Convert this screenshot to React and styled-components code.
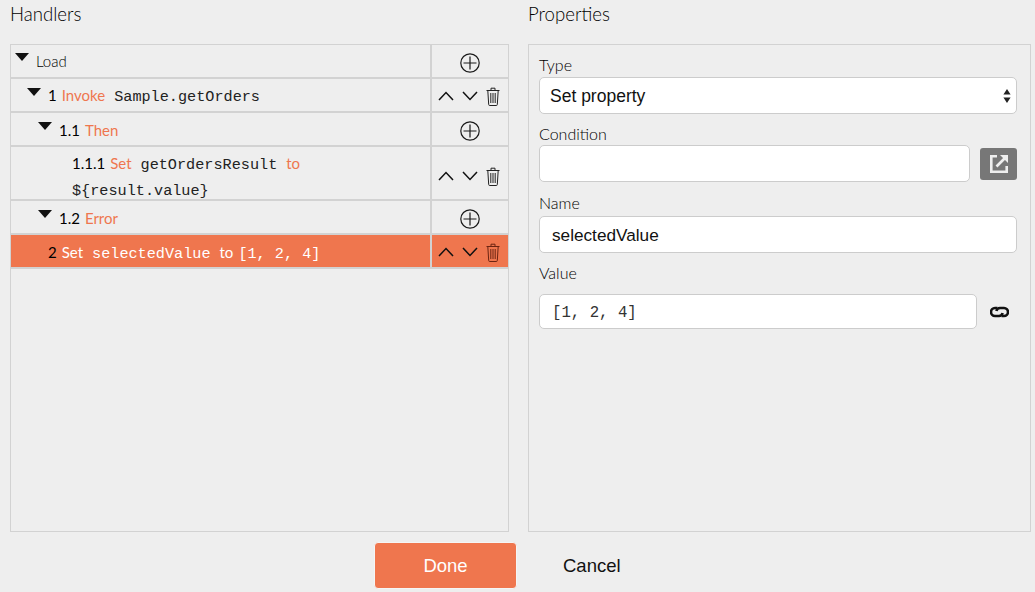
import React from 'react';
import styled, { createGlobalStyle } from 'styled-components';

const ORANGE = '#ef764e';
const LINE = '#d2d2d2';

const GlobalStyle = createGlobalStyle`
  html, body {
    margin: 0;
    padding: 0;
    background: #eeeeee;
  }
  body {
    font-family: Lato, sans-serif;
    font-weight: 300;
    color: #000;
  }
`;

const Page = styled.div`
  width: 1035px;
  height: 592px;
  overflow: hidden;
  display: flex;
  flex-direction: column;
  padding: 0 4px 0 10px;
  box-sizing: border-box;
`;

const Columns = styled.div`
  display: grid;
  grid-template-columns: 499px 503px;
  column-gap: 19px;
`;

const Heading = styled.div`
  font-size: 18.6px;
  line-height: 28px;
  height: 44px;
`;

const Tree = styled.div`
  height: 488px;
  box-sizing: border-box;
  border: 1px solid ${LINE};
  position: relative;
  display: flex;
  flex-direction: column;
`;

const Divider = styled.div`
  position: absolute;
  top: 0;
  left: 419px;
  width: 2px;
  height: 223px;
  background: ${LINE};
`;

const Row = styled.div`
  display: grid;
  grid-template-columns: 419px 78px;
  height: ${p => p.$height || 34}px;
  box-sizing: border-box;
  border-bottom: 2px solid ${LINE};
  background: ${p => (p.$selected ? ORANGE : 'transparent')};
`;

const Label = styled.div`
  display: flex;
  align-items: ${p => (p.$wrap ? 'flex-start' : 'center')};
  padding: ${p => p.$top ?? 1}px 0 0 ${p => p.$indent}px;
  font-size: 15px;
  white-space: nowrap;
`;

const Line = styled.div`
  line-height: ${p => p.$leading || 22}px;
  padding-top: ${p => p.$top || 0}px;
`;

const Caret = styled.span`
  width: 0;
  height: 0;
  border-left: 7.5px solid transparent;
  border-right: 7.5px solid transparent;
  border-top: 8px solid #111;
  margin: 0 7px 8px -1px;
`;

const Number = styled.span`
  font-weight: 400;
  margin-right: 5px;
`;

const Keyword = styled.span`
  font-weight: 400;
  color: ${p => (p.$light ? '#fff' : ORANGE)};
`;

const Code = styled.span`
  font-family: "Liberation Mono", monospace;
  font-weight: 400;
  font-size: 15.2px;
  color: ${p => (p.$light ? '#fff' : '#222')};
  margin: 0 ${p => p.$gap ?? 9}px;
`;

const Actions = styled.div`
  margin-left: ${p => (p.$add ? 2 : 0)}px;
  padding-top: ${p => (p.$add ? 3 : 2)}px;
  display: flex;
  align-items: center;
  justify-content: center;
  gap: 8px;
  color: ${p => (p.$selected ? '#6b2412' : '#222')};
`;

const Panel = styled.div`
  height: 488px;
  box-sizing: border-box;
  border: 1px solid ${LINE};
  padding: 9px 13px 0 10px;
  display: flex;
  flex-direction: column;
`;

const FieldLabel = styled.div`
  font-size: 16px;
  line-height: 22px;
  height: ${p => p.$height || 22}px;
`;

const FieldRow = styled.div`
  display: flex;
  align-items: center;
  margin-bottom: ${p => p.$bottom || 8}px;
`;

const Box = styled.div`
  box-sizing: border-box;
  width: ${p => p.$width || 478}px;
  height: ${p => p.$height || 37}px;
  background: #fff;
  border: 1px solid #cccccc;
  border-radius: 5px;
  padding: 2px 0 0 ${p => p.$pad || 12}px;
  display: flex;
  align-items: center;
  justify-content: space-between;
  font-family: "Liberation Sans", Arial, sans-serif;
  font-weight: 400;
  font-size: ${p => p.$size || 17.2}px;
  color: #111;
`;

const ValueCode = styled.span`
  font-family: "Liberation Mono", monospace;
  font-size: 15.7px;
  color: #333;
`;

const OpenButton = styled.div`
  width: 37px;
  height: 32px;
  margin-left: 10px;
  background: #777;
  border-radius: 3px;
  display: flex;
  align-items: center;
  justify-content: center;
`;

const LinkWrap = styled.div`
  width: 40px;
  display: flex;
  justify-content: flex-end;
  padding-right: 8px;
  box-sizing: border-box;
`;

const ArrowWrap = styled.div`
  display: flex;
  margin: -2px 5px 0 0;
`;

const Footer = styled.div`
  display: flex;
  align-items: center;
  margin: 10px 0 0 364px;
`;

const DoneButton = styled.button`
  width: 143px;
  height: 47px;
  background: ${ORANGE};
  border: 1px solid #f5f5f5;
  border-radius: 4px;
  color: #fff;
  font-family: "Liberation Sans", Arial, sans-serif;
  font-size: 18.5px;
`;

const CancelButton = styled.button`
  margin-left: 46px;
  padding: 0;
  background: none;
  border: 0;
  color: #111;
  font-family: "Liberation Sans", Arial, sans-serif;
  font-size: 18.5px;
`;

const Plus = () => (
  <svg width="20" height="20" viewBox="0 0 20 20" fill="none" stroke="#1a1a1a" strokeWidth="1.2">
    <circle cx="10" cy="10" r="9.2" />
    <path d="M10 3.5v13M3.5 10h13" />
  </svg>
);

const Up = () => (
  <svg width="16" height="10" viewBox="0 0 16 10" fill="none" stroke="#111" strokeWidth="1.5">
    <path d="M1 9l7-7.5L15 9" />
  </svg>
);

const Down = () => (
  <svg width="16" height="10" viewBox="0 0 16 10" fill="none" stroke="#111" strokeWidth="1.5">
    <path d="M1 1l7 7.5L15 1" />
  </svg>
);

const Trash = () => (
  <svg width="14" height="19" viewBox="0 0 14 19" fill="none" stroke="currentColor" strokeWidth="1">
    <path d="M.5 3.5h13M5 3.5V1.2h4v2.3" />
    <path d="M1.8 3.5l.9 14a1 1 0 0 0 1 1h6.6a1 1 0 0 0 1-1l.9-14" />
    <path d="M4.8 6v10M7 6v10M9.2 6v10" />
  </svg>
);

const MoveActions = ({ selected }) => (
  <Actions $selected={selected}>
    <Up />
    <Down />
    <Trash />
  </Actions>
);

const AddAction = () => (
  <Actions $add>
    <Plus />
  </Actions>
);

const OpenIcon = () => (
  <svg width="20" height="20" viewBox="0 0 20 20" fill="none" stroke="#eee" strokeWidth="2.6">
    <path d="M8 2.3H2.3v15.4h15.4V12" />
    <path d="M7.5 12.5L16 4" />
    <path d="M11 1h8v8z" fill="#eee" stroke="none" />
  </svg>
);

const LinkIcon = () => (
  <svg width="19" height="12" viewBox="0 0 19 12" fill="none" stroke="#111" strokeWidth="2.6">
    <path d="M7.5 2H5a4 4 0 0 0 0 8h4a4 4 0 0 0 3.6-3" />
    <path d="M11.5 10H14a4 4 0 0 0 0-8h-4a4 4 0 0 0-3.6 3" />
  </svg>
);

const SelectArrows = () => (
  <svg width="8" height="14" viewBox="0 0 8 14" fill="#222">
    <path d="M4 0l3.6 5.5H.4zM4 14L.4 8.5h7.2z" />
  </svg>
);

export default function App() {
  return (
    <Page>
      <GlobalStyle />
      <Columns>
        <div>
          <Heading>Handlers</Heading>
          <Tree>
            <Divider />
            <Row>
              <Label $indent={5} $top={0}>
                <Caret />
                <Line>Load</Line>
              </Label>
              <AddAction />
            </Row>
            <Row>
              <Label $indent={17}>
                <Caret />
                <Line>
                  <Number>1</Number>
                  <Keyword>Invoke</Keyword>
                  <Code>Sample.getOrders</Code>
                </Line>
              </Label>
              <MoveActions />
            </Row>
            <Row>
              <Label $indent={28}>
                <Caret />
                <Line>
                  <Number>1.1</Number>
                  <Keyword>Then</Keyword>
                </Line>
              </Label>
              <AddAction />
            </Row>
            <Row $height={54}>
              <Label $indent={61} $wrap>
                <Line $leading={24} $top={3}>
                  <Number>1.1.1</Number>
                  <Keyword>Set</Keyword>
                  <Code>getOrdersResult</Code>
                  <Keyword>to</Keyword>
                  <br />
                  <Code $gap={0}>{'${result.value}'}</Code>
                </Line>
              </Label>
              <MoveActions />
            </Row>
            <Row>
              <Label $indent={28}>
                <Caret />
                <Line>
                  <Number>1.2</Number>
                  <Keyword>Error</Keyword>
                </Line>
              </Label>
              <AddAction />
            </Row>
            <Row $selected>
              <Label $indent={37}>
                <Line $top={2}>
                  <Number>2</Number>
                  <Keyword $light>Set</Keyword>
                  <Code $light>selectedValue</Code>
                  <Keyword $light>to</Keyword>
                  <Code $light $gap={5}>[1, 2, 4]</Code>
                </Line>
              </Label>
              <MoveActions selected />
            </Row>
          </Tree>
        </div>
        <div>
          <Heading>Properties</Heading>
          <Panel>
            <FieldLabel $height={23}>Type</FieldLabel>
            <FieldRow $bottom={9}>
              <Box $pad={10} $size={17.5}>
                Set property
                <ArrowWrap>
                  <SelectArrows />
                </ArrowWrap>
              </Box>
            </FieldRow>
            <FieldLabel>Condition</FieldLabel>
            <FieldRow $bottom={10}>
              <Box $width={431} />
              <OpenButton>
                <OpenIcon />
              </OpenButton>
            </FieldRow>
            <FieldLabel $height={24}>Name</FieldLabel>
            <FieldRow $bottom={9}>
              <Box>selectedValue</Box>
            </FieldRow>
            <FieldLabel $height={32}>Value</FieldLabel>
            <FieldRow>
              <Box $width={438} $height={35}>
                <ValueCode>[1, 2, 4]</ValueCode>
              </Box>
              <LinkWrap>
                <LinkIcon />
              </LinkWrap>
            </FieldRow>
          </Panel>
        </div>
      </Columns>
      <Footer>
        <DoneButton>Done</DoneButton>
        <CancelButton>Cancel</CancelButton>
      </Footer>
    </Page>
  );
}
